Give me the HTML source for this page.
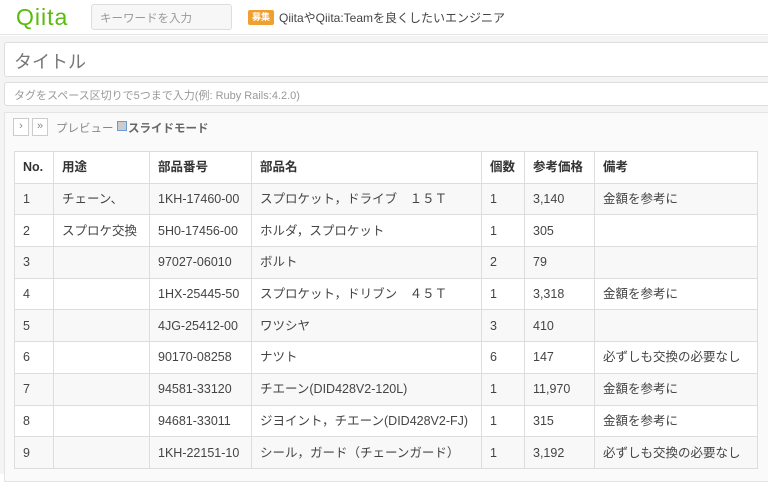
<!DOCTYPE html>
<html><head><meta charset="utf-8"><style>
*{box-sizing:border-box;margin:0;padding:0}
body{width:768px;height:474px;overflow:hidden;background:#fff;font-family:"Liberation Sans","Noto Sans CJK JP",sans-serif;color:#333;position:relative}
.hdr{position:absolute;left:0;top:0;width:768px;height:35px;background:#fff;border-bottom:1px solid #e6e6e6}
.logo{position:absolute;left:16px;top:4px;font-size:23px;color:#59bb0c;letter-spacing:1px;line-height:26px}
.search{position:absolute;left:91px;top:4px;width:141px;height:26px;border:1px solid #ddd;border-radius:3px;background:#f7f7f7;font-size:11.5px;color:#999;padding:5px 8px}
.badge{position:absolute;left:248px;top:10px;width:26px;height:15px;background:#f0a030;border-radius:2px;color:#fff;font-size:9px;text-align:center;line-height:15px;font-weight:bold}
.hire{position:absolute;left:279px;top:9px;font-size:12px;color:#444}
.main{position:absolute;left:0;top:36px;width:768px;height:438px;background:#f4f4f4}
.title{position:absolute;left:4px;top:6px;width:780px;height:35px;background:#fff;border:1px solid #ddd;border-radius:3px;font-size:18px;color:#777;padding:5px 9px}
.tags{position:absolute;left:4px;top:46px;width:780px;height:24px;background:#fff;border:1px solid #ddd;border-radius:3px;font-size:11px;color:#999;padding:4px 9px}
.pane{position:absolute;left:4px;top:76px;width:780px;height:370px;background:#fafafa;border:1px solid #e4e4e4}
.btn{position:absolute;top:82px;width:16px;height:18px;border:1px solid #ccc;background:#fff;font-size:11px;color:#888;text-align:center;line-height:15px}
.pv{position:absolute;left:56px;top:84px;font-size:11.5px;color:#888}
.cb{position:absolute;left:117px;top:85px;width:10px;height:10px;border:1px solid #6a9ad8;background:#ccc}
.sm{position:absolute;left:128px;top:84px;font-size:11.5px;color:#666;font-weight:bold}
table{position:absolute;left:14px;top:115px;border-collapse:collapse;font-size:12.5px;background:#fff;font-family:"Liberation Sans","Noto Sans CJK JP",sans-serif}
td,th{border:1px solid #ddd;padding:0 8px;height:31.7px;line-height:16px;vertical-align:middle;text-align:left;color:#444;white-space:nowrap}
td span,th span{display:inline-block;line-height:16px;height:16px;vertical-align:top}
th{font-weight:bold;color:#333}
tr:nth-child(even) td{background:#f8f8f8}
</style></head><body>
<div class="hdr"><div class="logo">Qiita</div><div class="search">キーワードを入力</div><div class="badge">募集</div><div class="hire">QiitaやQiita:Teamを良くしたいエンジニア</div></div>
<div class="main">
<div class="title">タイトル</div>
<div class="tags">タグをスペース区切りで5つまで入力(例: Ruby Rails:4.2.0)</div>
<div class="pane"></div>
<div class="btn" style="left:13px">›</div><div class="btn" style="left:32px">»</div>
<div class="pv">プレビュー</div><div class="cb"></div><div class="sm">スライドモード</div>
<table>
<colgroup><col style="width:39px"><col style="width:96px"><col style="width:102px"><col style="width:230px"><col style="width:43px"><col style="width:70px"><col style="width:163px"></colgroup>
<tr><th><span>No.</span></th><th><span>用途</span></th><th><span>部品番号</span></th><th><span>部品名</span></th><th><span>個数</span></th><th><span>参考価格</span></th><th><span>備考</span></th></tr>
<tr><td><span>1</span></td><td><span>チェーン、</span></td><td><span>1KH-17460-00</span></td><td><span>スプロケット，ドライブ　１５Ｔ</span></td><td><span>1</span></td><td><span>3,140</span></td><td><span>金額を参考に</span></td></tr>
<tr><td><span>2</span></td><td><span>スプロケ交換</span></td><td><span>5H0-17456-00</span></td><td><span>ホルダ，スプロケット</span></td><td><span>1</span></td><td><span>305</span></td><td></td></tr>
<tr><td><span>3</span></td><td></td><td><span>97027-06010</span></td><td><span>ボルト</span></td><td><span>2</span></td><td><span>79</span></td><td></td></tr>
<tr><td><span>4</span></td><td></td><td><span>1HX-25445-50</span></td><td><span>スプロケット，ドリブン　４５Ｔ</span></td><td><span>1</span></td><td><span>3,318</span></td><td><span>金額を参考に</span></td></tr>
<tr><td><span>5</span></td><td></td><td><span>4JG-25412-00</span></td><td><span>ワツシヤ</span></td><td><span>3</span></td><td><span>410</span></td><td></td></tr>
<tr><td><span>6</span></td><td></td><td><span>90170-08258</span></td><td><span>ナツト</span></td><td><span>6</span></td><td><span>147</span></td><td><span>必ずしも交換の必要なし</span></td></tr>
<tr><td><span>7</span></td><td></td><td><span>94581-33120</span></td><td><span>チエーン(DID428V2-120L)</span></td><td><span>1</span></td><td><span>11,970</span></td><td><span>金額を参考に</span></td></tr>
<tr><td><span>8</span></td><td></td><td><span>94681-33011</span></td><td><span>ジヨイント，チエーン(DID428V2-FJ)</span></td><td><span>1</span></td><td><span>315</span></td><td><span>金額を参考に</span></td></tr>
<tr><td><span>9</span></td><td></td><td><span>1KH-22151-10</span></td><td><span>シール，ガード（チェーンガード）</span></td><td><span>1</span></td><td><span>3,192</span></td><td><span>必ずしも交換の必要なし</span></td></tr>
</table>
</div>
</body></html>
